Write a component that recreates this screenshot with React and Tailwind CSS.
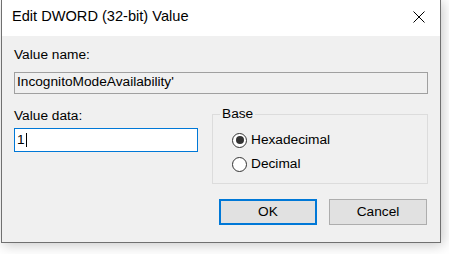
import React from "react";

const font = { fontFamily: '"Liberation Sans", Arial, sans-serif' };

function Radio({ checked, label }) {
  return (
    <div className="flex items-center h-[16px]">
      <span className="ml-[12px] w-[15px] h-[15px] rounded-full border border-[#333333] bg-white flex items-center justify-center">
        {checked && <span className="w-[8px] h-[8px] rounded-full bg-[#333333]" />}
      </span>
      <span className="ml-[4px] leading-[16px]">{label}</span>
    </div>
  );
}

const App = () => {
  return (
    <div
      className="w-[449px] h-[254px] bg-white overflow-hidden text-[13.7px] text-black"
      style={font}
    >
      <div className="ml-[1px] w-[440px] h-[243px] border border-t-0 border-[#707070] bg-[#f0f0f0] shadow-[2px_2px_12px_rgba(0,0,0,0.22)] flex flex-col">
        {/* title bar */}
        <div className="h-[36px] bg-white flex justify-between pl-[10px] pr-[15px] pt-[6px]">
          <span className="text-[14.6px] leading-[20px]">Edit DWORD (32-bit) Value</span>
          <svg width="12" height="12" viewBox="0 0 12 12" className="mt-[5px]">
            <path d="M0.5 0.5L11.5 11.5M11.5 0.5L0.5 11.5" stroke="#000" strokeWidth="1" />
          </svg>
        </div>

        {/* body */}
        <div className="pl-[12px] pr-[12px] pt-[11px]">
          <div className="leading-[16px]">Value name:</div>
          <div className="mt-[9px] w-[414px] h-[22px] border border-[#a0a0a0] bg-[#f0f0f0] pl-[2px] pt-[1px] leading-[16px]">
            IncognitoModeAvailability'
          </div>

          <div className="mt-[12px] flex items-start">
            <div className="mt-[2px] w-[184px]">
              <div className="leading-[16px]">Value data:</div>
              <div className="mt-[4px] h-[24px] border border-[#0078d7] bg-white pl-[2px] flex items-center">
                <span className="leading-[16px]">1</span>
                <span className="ml-[1px] w-[1px] h-[14px] bg-black" />
              </div>
            </div>

            <fieldset className="ml-[14px] w-[216px] border border-[#dcdcdc] pl-[7px] pb-[11px]">
              <legend className="px-[2px] leading-[16px]">Base</legend>
              <div className="mt-[10px] flex flex-col gap-[8px]">
                <Radio checked label="Hexadecimal" />
                <Radio label="Decimal" />
              </div>
            </fieldset>
          </div>

          <div className="mt-[15px] flex justify-end gap-[12px] pr-[1px]">
            <button className="w-[98px] h-[26px] border-2 border-[#0078d7] bg-[#e1e1e1] leading-[16px]">
              OK
            </button>
            <button className="w-[98px] h-[26px] border border-[#adadad] bg-[#e1e1e1] leading-[16px]">
              Cancel
            </button>
          </div>
        </div>
      </div>
    </div>
  );
};

export default App;
